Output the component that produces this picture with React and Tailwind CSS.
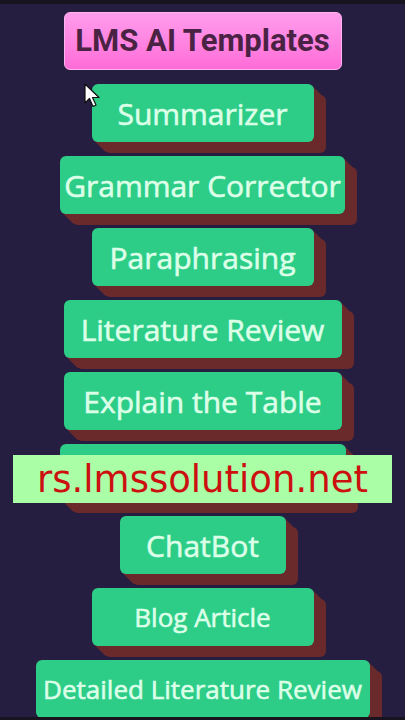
import React from "react";

const templates = [
  { label: "Summarizer", w: "w-[222px]", size: "text-[30px]" },
  { label: "Grammar Corrector", w: "w-[285px]", size: "text-[30px]" },
  { label: "Paraphrasing", w: "w-[222px]", size: "text-[30px]" },
  { label: "Literature Review", w: "w-[278px]", size: "text-[30px]" },
  { label: "Explain the Table", w: "w-[278px]", size: "text-[30px]" },
  { label: "", w: "w-[286px]", size: "text-[30px]" },
  { label: "ChatBot", w: "w-[166px]", size: "text-[30px]" },
  { label: "Blog Article", w: "w-[222px]", size: "text-[26px]" },
  { label: "Detailed Literature Review", w: "w-[334px]", size: "text-[26px]" },
];

function TemplateButton({ label, w, size }) {
  return (
    <button
      className={`${w} h-[58px] shrink-0 rounded-[6px] bg-[#2dcd88] text-[#dcffe8] ${size} [-webkit-text-stroke:0.6px_#dcffe8] whitespace-nowrap flex items-center justify-center shadow-[2px_2px_0_#6a2a2c,4px_4px_0_#6a2a2c,6px_6px_0_#6a2a2c,8px_8px_0_#6a2a2c,10px_10px_0_#6a2a2c,12px_11px_0_#6a2a2c]`}
      style={{ fontFamily: '"Open Sans", "Noto Sans", sans-serif' }}
    >
      {label}
    </button>
  );
}

function Cursor() {
  return (
    <svg
      className="absolute left-[84px] top-[79px]"
      width="18"
      height="26"
      viewBox="0 0 18 26"
    >
      <path
        d="M1 1 L1 20 L5.5 15.5 L9 23.5 L12 22 L8.5 14.5 L15 14.5 Z"
        fill="#ffffff"
        stroke="#111111"
        strokeWidth="1.2"
        strokeLinejoin="round"
      />
    </svg>
  );
}

export default function App() {
  return (
    <div className="relative w-[405px] h-[720px] overflow-hidden bg-[#261e40] border-t-[4px] border-[#17131f]">
      <div className="flex flex-col items-center gap-[14px] pt-[8px]">
        <div
          className="w-[278px] h-[58px] shrink-0 rounded-[6px] bg-gradient-to-b from-[#ff9cec] to-[#ff6cd8] border border-[#ffb4f0] text-[#4a2344] text-[31px] font-bold flex items-center justify-center"
          style={{ fontFamily: "Roboto, 'Liberation Sans', sans-serif" }}
        >
          LMS AI Templates
        </div>
        {templates.map((t, i) => (
          <TemplateButton key={i} {...t} />
        ))}
      </div>

      <Cursor />

      <div
        className="absolute left-[13px] top-[451px] w-[379px] h-[48px] bg-[#aaffa6] text-[#cc1010] text-[37px] flex items-center justify-center leading-none"
        style={{ fontFamily: '"DejaVu Sans", Verdana, sans-serif' }}
      >
        rs.lmssolution.net
      </div>

      <div className="absolute left-0 bottom-0 w-full h-[3px] bg-[#17131f]" />
    </div>
  );
}
